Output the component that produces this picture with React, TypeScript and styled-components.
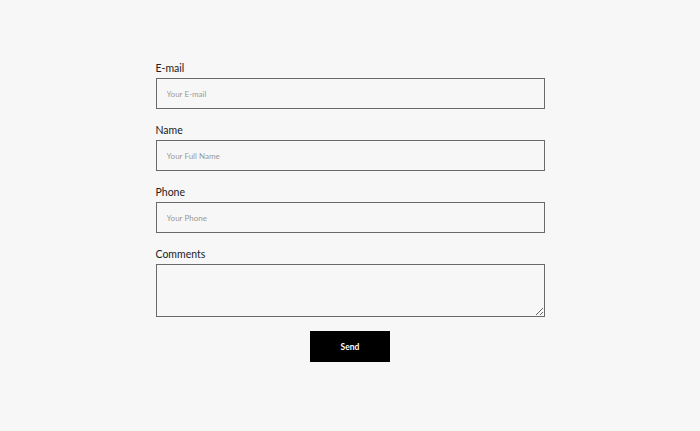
import React from "react";
import styled, { createGlobalStyle } from "styled-components";

const GlobalStyle = createGlobalStyle`
    html, body {
        margin: 0;
        padding: 0;
        background: #f7f7f7;
        font-family: Lato, "Liberation Sans", sans-serif;
    }
`;

const Page = styled.div`
    width: 700px;
    height: 431px;
    display: flex;
    justify-content: center;
    padding-top: 61px;
    box-sizing: border-box;
`;

const Form = styled.form`
    width: 389px;
    display: flex;
    flex-direction: column;
`;

const Field = styled.div`
    display: flex;
    flex-direction: column;
    margin-bottom: 14px;
`;

const Label = styled.label`
    font-size: 10.5px;
    color: #222;
    line-height: 14px;
    margin-bottom: 3px;
`;

const Input = styled.input`
    height: 31px;
    box-sizing: border-box;
    border: 1px solid #6a6a6a;
    background: #f7f7f7;
    padding: 0 10px;
    font-family: inherit;
    font-size: 8px;
    color: #333;
    outline: none;

    &::placeholder {
        color: #999;
    }
`;

const TextArea = styled.textarea`
    height: 53px;
    box-sizing: border-box;
    border: 1px solid #6a6a6a;
    background: #f7f7f7;
    padding: 6px 10px;
    font-family: inherit;
    font-size: 8px;
    outline: none;
    resize: vertical;
`;

const SendButton = styled.button`
    align-self: center;
    width: 80px;
    height: 31px;
    background: #000;
    color: #fff;
    border: none;
    font-family: inherit;
    font-size: 8.5px;
    font-weight: 700;
    cursor: pointer;
`;

const fields = [
    { id: "email", label: "E-mail", placeholder: "Your E-mail" },
    { id: "name", label: "Name", placeholder: "Your Full Name" },
    { id: "phone", label: "Phone", placeholder: "Your Phone" },
];

const App = (): JSX.Element => {
    return (
        <>
            <GlobalStyle />
            <Page>
                <Form onSubmit={(e) => e.preventDefault()}>
                    {fields.map((field) => (
                        <Field key={field.id}>
                            <Label htmlFor={field.id}>{field.label}</Label>
                            <Input id={field.id} placeholder={field.placeholder} />
                        </Field>
                    ))}
                    <Field>
                        <Label htmlFor="comments">Comments</Label>
                        <TextArea id="comments" />
                    </Field>
                    <SendButton type="submit">Send</SendButton>
                </Form>
            </Page>
        </>
    );
};

export default App;
